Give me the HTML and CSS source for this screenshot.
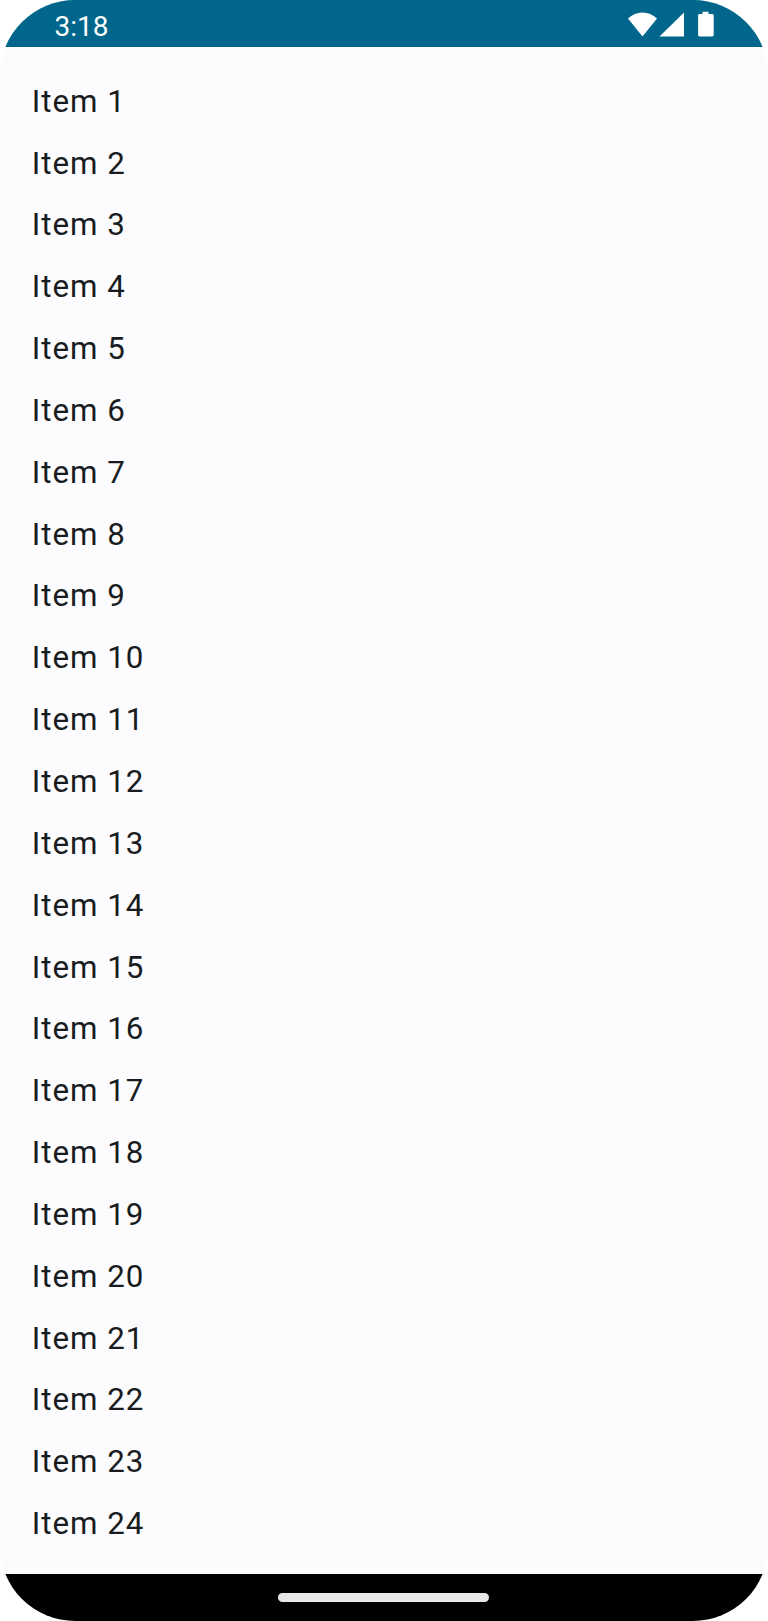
FILE: index.html
```
<!doctype html>
<html lang="en">
<head>
<meta charset="utf-8">
<title>Item list</title>
<link rel="stylesheet" href="styles.css">
</head>
<body>
<div class="phone">
	<header class="status_bar">
		<span class="clock">3:18</span>
		<svg class="status_icons" width="88" height="47" viewBox="0 0 88 47">
			<path d="M0 18.5C8 10.5 21 10.5 29 18.5L14.5 36.5Z"/>
			<path d="M31.5 36.5L56 12.5V36.5Z"/>
			<path d="M74.5 11.7h6v2.3h3.8q1.4 0 1.4 1.4v19.7q0 1.4-1.4 1.4h-12.8q-1.4 0-1.4-1.4V15.4q0-1.4 1.4-1.4h3z"/>
		</svg>
	</header>
	<main class="content">
		<ul class="item_list">
			<li>Item 1</li>
			<li>Item 2</li>
			<li>Item 3</li>
			<li>Item 4</li>
			<li>Item 5</li>
			<li>Item 6</li>
			<li>Item 7</li>
			<li>Item 8</li>
			<li>Item 9</li>
			<li>Item 10</li>
			<li>Item 11</li>
			<li>Item 12</li>
			<li>Item 13</li>
			<li>Item 14</li>
			<li>Item 15</li>
			<li>Item 16</li>
			<li>Item 17</li>
			<li>Item 18</li>
			<li>Item 19</li>
			<li>Item 20</li>
			<li>Item 21</li>
			<li>Item 22</li>
			<li>Item 23</li>
			<li>Item 24</li>
		</ul>
	</main>
	<footer class="nav_bar">
		<div class="nav_handle"></div>
	</footer>
</div>
</body>
</html>
```
FILE: styles.css
```
* {margin: 0; padding: 0; box-sizing: border-box;}
body {
	background: #fff;
	font-family: Roboto, sans-serif;
}
.phone {
	display: flex;
	flex-direction: column;
	width: 768px;
	height: 1621px;
	border-radius: 75px;
	overflow: hidden;
	background: #fcfcff;
}
.status_bar {
	display: flex;
	justify-content: space-between;
	height: 47px;
	padding: 0 52px 0 54.5px;
	background: #00668b;
	color: #fff;
}
.clock {
	font-size: 28px;
	line-height: 54px;
}
.status_icons {
	fill: #fff;
}
.content {
	flex: 1;
	padding: 23.7px 31.8px 0;
}
.item_list {
	list-style: none;
}
.item_list li {
	height: 61.85px;
	font-size: 31.3px;
	line-height: 61.85px;
	letter-spacing: 0.98px;
	color: #191c1e;
}
.nav_bar {
	display: flex;
	justify-content: center;
	align-items: center;
	height: 47px;
	padding-right: 1px;
	background: #000;
}
.nav_handle {
	width: 211px;
	height: 9px;
	border-radius: 5px;
	background: #e9e8e9;
}
```
